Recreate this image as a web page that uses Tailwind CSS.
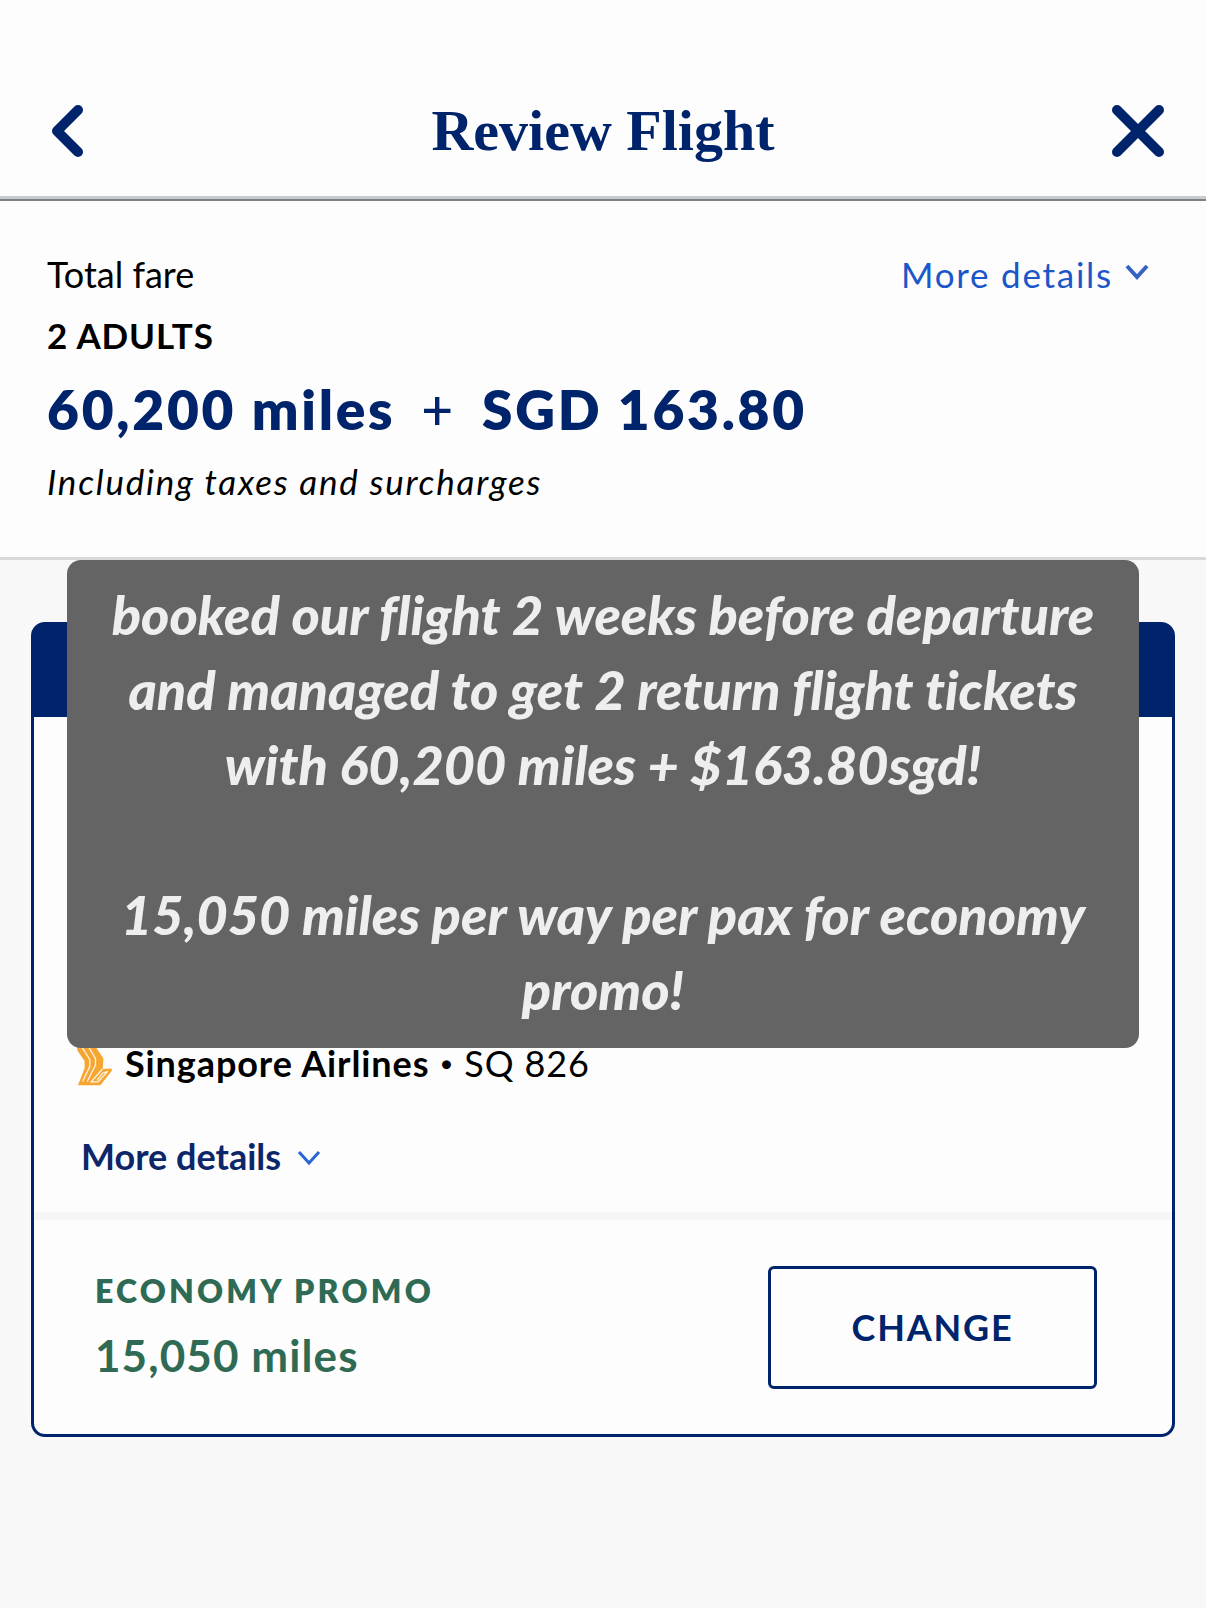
<!DOCTYPE html>
<html lang="en">
<head>
    <meta charset="UTF-8">
    <meta name="viewport" content="width=device-width, initial-scale=1.0">
    <title>Review Flight</title>
    <script src="https://cdn.jsdelivr.net/npm/@tailwindcss/browser@4"></script>
</head>
<body class="bg-[#f8f8f8] min-h-screen font-['Lato',sans-serif] text-[36px] text-black">
    <!-- Top bar -->
    <header class="bg-[#fdfdfd] pt-[66px] border-b-2 border-[#7a8084]">
        <div class="h-[133px] px-[40px] flex items-center justify-between border-b-3 border-[#c9cccf]">
            <button type="button" aria-label="Back" class="w-14 pl-[10px]">
                <svg class="w-9 h-14" viewBox="0 0 36 56" fill="none" stroke="#00246b" stroke-width="10" stroke-linecap="round" stroke-linejoin="round">
                    <path d="M28 7L7 28L28 49" />
                </svg>
            </button>
            <h1 class="font-['Liberation_Serif',serif] font-bold text-[58px] leading-[64px] text-[#00246b]">Review Flight</h1>
            <button type="button" aria-label="Close">
                <svg class="w-14 h-14" viewBox="0 0 56 56" fill="none" stroke="#00246b" stroke-width="10" stroke-linecap="round">
                    <path d="M7 7L49 49M49 7L7 49" />
                </svg>
            </button>
        </div>
    </header>

    <!-- Fare summary -->
    <section class="bg-[#fdfdfd] px-[47px] pt-[43px] pb-[47px] border-b-3 border-[#d9d9d9]">
        <div class="flex justify-between leading-[60px]">
            <p>Total fare</p>
            <button type="button" class="flex items-center gap-3 pr-[10px] text-[35px] tracking-wider text-[#1b57c8]">
                More details
                <svg class="w-6 h-5" viewBox="0 0 24 20" fill="none" stroke="#3563c4" stroke-width="4">
                    <path d="M2 2L12 13L22 2" />
                </svg>
            </button>
        </div>
        <p class="font-bold text-[35px] leading-[62px] tracking-wide">2 ADULTS</p>
        <p class="flex gap-[26px] font-extrabold text-[55px] leading-[86px] tracking-wider text-[#00246b]">
            <span>60,200 miles</span>
            <span class="font-medium">+</span>
            <span>SGD 163.80</span>
        </p>
        <p class="italic text-[35px] leading-[58px] tracking-wider">Including taxes and surcharges</p>
    </section>

    <main class="relative px-[31px] pt-[62px] pb-10">
        <!-- Flight card -->
        <article class="bg-[#fdfdfd] border-3 border-[#00246b] rounded-[14px]">
            <div class="h-[92px] bg-[#00246b] rounded-t-lg"></div>
            <div class="min-h-[495px] px-[42px] pb-8 flex flex-col justify-end gap-[45px]">
                <div class="flex items-center gap-3 leading-[48px] tracking-wide">
                    <svg class="w-[37px] h-12" viewBox="48 60 112 144">
                        <path fill="#f7a531" d="M50 62L104 78L131 118L129 150L155 149L157 155L122 199L54 199L74 148L74 126L52 94Z" />
                        <path fill="none" stroke="#fdf3e2" stroke-width="4" d="M66 84L90 122L90 142L68 188M84 80L107 118L107 138L82 188M128 150L94 189L115 189L144 157L128 163L112 184" />
                    </svg>
                    <p class="flex items-center gap-[10px]"><strong class="font-bold">Singapore Airlines</strong> <span class="text-[24px]">•</span> SQ 826</p>
                </div>
                <button type="button" class="flex items-center gap-4 pl-[5px] leading-[48px] font-bold text-[#0c2769]">
                    More details
                    <svg class="w-6 h-5" viewBox="0 0 24 20" fill="none" stroke="#2a66d0" stroke-width="3">
                        <path d="M2 6L12 17L22 6" />
                    </svg>
                </button>
            </div>
            <div class="pl-[61px] pr-[75px] py-[39px] flex items-center justify-between border-t-8 border-[#f6f6f6]">
                <div class="pb-2 leading-[64px] text-[#2f6b54]">
                    <p class="font-extrabold text-[32px] tracking-widest">ECONOMY PROMO</p>
                    <p class="font-bold text-[44px] tracking-wide">15,050 miles</p>
                </div>
                <button type="button" class="w-[329px] h-[123px] border-3 border-[#00246b] rounded-md font-bold tracking-wider text-[#00246b]">CHANGE</button>
            </div>
        </article>

        <!-- Caption -->
        <div class="absolute top-0 inset-x-[67px] pt-[17px] pb-[21px] rounded-[14px] bg-[#646464] text-center text-[#eeeeee] font-black italic text-[54px] leading-[75px] [font-variant-ligatures:none]">
            <p>booked our flight 2 weeks before departure<br>and managed to get 2 return flight tickets<br>with 60,200 miles + $163.80sgd!</p>
            <p class="pt-[75px]">15,050 miles per way per pax for economy<br>promo!</p>
        </div>
    </main>
</body>
</html>
